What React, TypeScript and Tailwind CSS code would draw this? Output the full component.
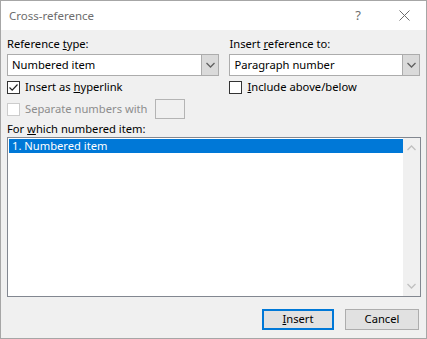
import React from "react";

const font = { fontFamily: '"Noto Sans", "Open Sans", Arial, sans-serif' };

function Chevron({ dir = "down", color = "#606060" }: { dir?: "down" | "up"; color?: string }) {
  return (
    <svg width="9" height="6" viewBox="0 0 9 6" fill="none">
      <path
        d={dir === "down" ? "M0.5 1 L4.5 5 L8.5 1" : "M0.5 5 L4.5 1 L8.5 5"}
        stroke={color}
        strokeWidth="1.3"
      />
    </svg>
  );
}

function Select({ value }: { value: string }) {
  return (
    <div className="flex h-[22px] w-full border border-[#acacac] bg-white">
      <div className="flex flex-1 items-center pl-[4px] text-black">{value}</div>
      <div className="flex w-[17px] items-center justify-center border-l border-[#acacac] bg-[#dadada]">
        <Chevron />
      </div>
    </div>
  );
}

function CheckBox({ checked, disabled }: { checked?: boolean; disabled?: boolean }) {
  return (
    <div
      className={`flex h-[13px] w-[13px] shrink-0 items-center justify-center border bg-white ${
        disabled ? "border-[#cccccc]" : "border-[#333333]"
      }`}
    >
      {checked && (
        <svg width="11" height="11" viewBox="0 0 11 11" fill="none">
          <path d="M1.5 5.5 L4.2 8.2 L9.5 2.5" stroke="#222" strokeWidth="1.2" />
        </svg>
      )}
    </div>
  );
}

export default function App() {
  return (
    <div className="h-[339px] w-[427px] border border-[#a6a6a6] bg-[#f0f0f0] text-[11.2px]" style={font}>
      {/* Title bar */}
      <div className="flex h-[29px] items-center bg-white pl-[8px]">
        <span className="flex-1 text-[11.5px] text-[#6d6d6d]">Cross-reference</span>
        <span className="mr-[38px] text-[13px] text-[#6d6d6d]">?</span>
        <svg className="mr-[16px]" width="11" height="11" viewBox="0 0 11 11">
          <path d="M0.5 0.5 L10.5 10.5 M10.5 0.5 L0.5 10.5" stroke="#6d6d6d" strokeWidth="1" />
        </svg>
      </div>

      <div className="pl-[6px] pr-[6px] pt-[6px]">
        <div className="flex gap-[10px]">
          {/* Left column */}
          <div className="w-[213px]">
            <div className="h-[18px] leading-[16px] text-black">
              Reference <span className="underline">t</span>ype:
            </div>
            <Select value="Numbered item" />
            <div className="mt-[5px] flex h-[13px] items-center gap-[5px]">
              <CheckBox checked />
              <span className="text-black">
                Insert as <span className="underline">h</span>yperlink
              </span>
            </div>
            <div className="mt-[5px] flex h-[20px] items-center gap-[5px]">
              <CheckBox disabled />
              <span className="text-[#8d8d8d]">Separate numbers with</span>
              <div className="ml-[2px] h-[20px] w-[30px] border border-[#b4b4b4] bg-[#f0f0f0]" />
            </div>
          </div>
          {/* Right column */}
          <div className="w-[191px]">
            <div className="h-[18px] leading-[16px] text-black">
              Insert <span className="underline">r</span>eference to:
            </div>
            <Select value="Paragraph number" />
            <div className="mt-[5px] flex h-[13px] items-center gap-[5px]">
              <CheckBox />
              <span className="text-black">
                <span className="underline">I</span>nclude above/below
              </span>
            </div>
          </div>
        </div>

        <div className="mt-[2px] h-[16px] leading-[16px] text-black">
          For <span className="underline">w</span>hich numbered item:
        </div>

        {/* List box */}
        <div className="flex h-[160px] w-[414px] border border-[#828790] bg-white">
          <div className="flex-1 pl-[1px] pt-[1px]">
            <div className="flex h-[14px] items-center bg-[#0078d7] pl-[3px] text-white">1. Numbered item</div>
          </div>
          <div className="flex w-[17px] flex-col items-center justify-between bg-[#f0f0f0] py-[7px]">
            <Chevron dir="up" color="#c0c0c0" />
            <Chevron dir="down" color="#c0c0c0" />
          </div>
        </div>

        {/* Buttons */}
        <div className="mt-[12px] flex justify-end gap-[11px] pr-[1px]">
          <button className="h-[21px] w-[72px] border-2 border-[#0078d7] bg-[#e1e1e1] text-black">
            <span className="underline">I</span>nsert
          </button>
          <button className="h-[21px] w-[74px] border border-[#adadad] bg-[#e1e1e1] text-black">
            Cancel
          </button>
        </div>
      </div>
    </div>
  );
}
